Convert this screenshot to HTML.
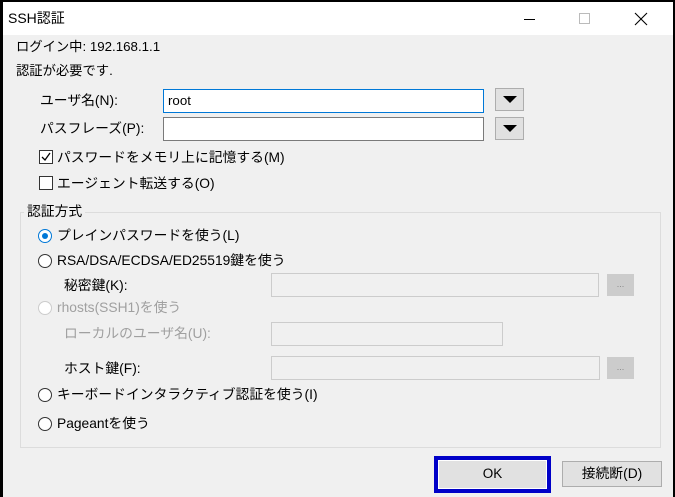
<!DOCTYPE html>
<html><head><meta charset="utf-8"><style>
*{margin:0;padding:0;box-sizing:border-box}
body{width:675px;height:497px;background:#000;position:relative;overflow:hidden;font-family:"Liberation Sans","Noto Sans CJK JP",sans-serif;font-size:13.3px;color:#000}
.win{position:absolute;left:3px;top:2px;width:670px;height:495px;background:#f0f0f0}
.tb{position:absolute;left:0;top:0;width:670px;height:33px;background:#fff}
.a{position:absolute;white-space:nowrap;line-height:16px;font-size:13.8px}
.in{position:absolute;background:#fff;border:1px solid #7a7a7a}
.dis{position:absolute;background:#f0f0f0;border:1px solid #ccc}
.btn{position:absolute;background:#e1e1e1;border:1px solid #adadad;text-align:center}
.db{position:absolute;background:#ccc;border:1px solid #ccc;color:#888;font-size:9px;text-align:center;line-height:18px}
.cb{position:absolute;width:14px;height:14px;border:1px solid #333;background:#fff}
.rd{position:absolute;width:14px;height:14px;border:1px solid #333;border-radius:50%;background:#fff}
.g{color:#a0a0a0}
</style></head><body>
<div class="win">
<div class="tb">
<div class="a" style="left:5px;top:8px;font-size:14px">SSH認証</div>
<div style="position:absolute;left:521px;top:17px;width:11px;height:1px;background:#000"></div>
<div style="position:absolute;left:576px;top:11px;width:11px;height:11px;border:1px solid #bbb"></div>
<svg style="position:absolute;left:631px;top:10px" width="14" height="14"><path d="M1 1L13 13M13 1L1 13" stroke="#000" stroke-width="1.1"/></svg>
</div>
<div class="a" style="left:13px;top:37px;font-size:13.3px">ログイン中: 192.168.1.1</div>
<div class="a" style="left:13px;top:61px;font-size:13.3px">認証が必要です.</div>
<div class="a" style="left:37px;top:91px">ユーザ名(N):</div>
<div class="in" style="left:160px;top:87px;width:321px;height:24px;border-color:#0078d7;padding:3px 4px;line-height:16px">root</div>
<div class="btn" style="left:492px;top:86px;width:29px;height:23px"><svg width="14" height="8" style="margin-top:7px"><path d="M0 0H14L7 7Z"/></svg></div>
<div class="a" style="left:37px;top:119px">パスフレーズ(P):</div>
<div class="in" style="left:160px;top:115px;width:321px;height:24px"></div>
<div class="btn" style="left:492px;top:115px;width:29px;height:23px"><svg width="14" height="8" style="margin-top:7px"><path d="M0 0H14L7 7Z"/></svg></div>
<div class="cb" style="left:36px;top:148px"><svg width="12" height="12"><path d="M2 6L5 9L10 2" stroke="#000" stroke-width="1.3" fill="none"/></svg></div>
<div class="a" style="left:54px;top:148px">パスワードをメモリ上に記憶する(M)</div>
<div class="cb" style="left:36px;top:174px"></div>
<div class="a" style="left:54px;top:174px">エージェント転送する(O)</div>
<div style="position:absolute;left:17px;top:210px;width:641px;height:236px;border:1px solid #dcdcdc"></div>
<div class="a" style="left:21px;top:202px;background:#f0f0f0;padding:0 3px">認証方式</div>
<div class="rd" style="left:35px;top:227px;border-color:#0078d7"><div style="position:absolute;left:3px;top:3px;width:6px;height:6px;border-radius:50%;background:#0078d7"></div></div>
<div class="a" style="left:54px;top:226px">プレインパスワードを使う(L)</div>
<div class="rd" style="left:35px;top:252px"></div>
<div class="a" style="left:54px;top:251px">RSA/DSA/ECDSA/ED25519鍵を使う</div>
<div class="a" style="left:61px;top:276px">秘密鍵(K):</div>
<div class="dis" style="left:268px;top:271px;width:328px;height:24px"></div>
<div class="db" style="left:604px;top:272px;width:27px;height:22px">...</div>
<div class="rd" style="left:35px;top:299px;border-color:#ccc"></div>
<div class="a g" style="left:54px;top:298px">rhosts(SSH1)を使う</div>
<div class="a g" style="left:61px;top:324px">ローカルのユーザ名(U):</div>
<div class="dis" style="left:268px;top:320px;width:232px;height:24px"></div>
<div class="a" style="left:61px;top:359px">ホスト鍵(F):</div>
<div class="dis" style="left:268px;top:354px;width:329px;height:24px"></div>
<div class="db" style="left:604px;top:355px;width:27px;height:22px">...</div>
<div class="rd" style="left:35px;top:386px"></div>
<div class="a" style="left:54px;top:385px">キーボードインタラクティブ認証を使う(I)</div>
<div class="rd" style="left:35px;top:415px"></div>
<div class="a" style="left:54px;top:414px">Pageantを使う</div>
<div style="position:absolute;left:431px;top:454px;width:117px;height:37px;border:4px solid #0000c8;background:#fff;padding:1px">
<div style="width:100%;height:100%;background:#e1e1e1;text-align:center;line-height:25px;font-size:13.5px">OK</div></div>
<div class="btn" style="left:559px;top:459px;width:100px;height:26px;line-height:24px;font-size:13.8px">接続断(D)</div>
</div>
</body></html>
